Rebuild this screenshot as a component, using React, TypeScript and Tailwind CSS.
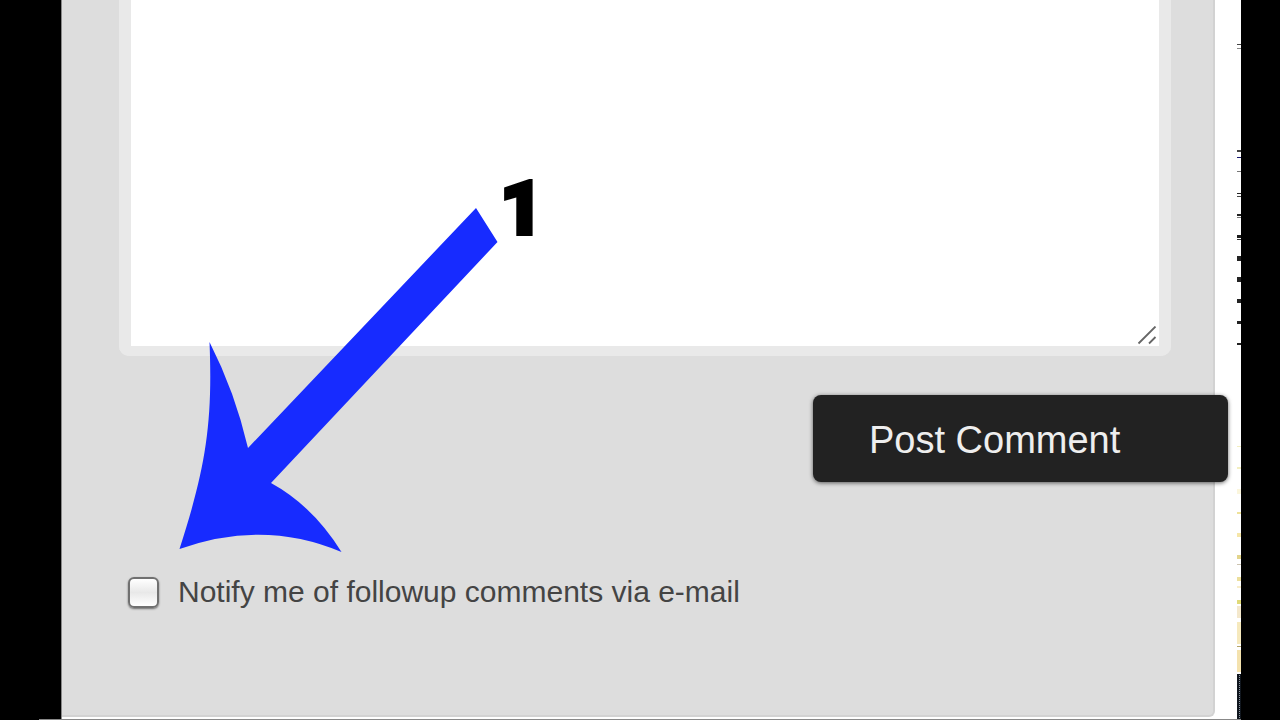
import React, { useState } from 'react';

interface Mark {
  y: number;
  h: number;
  color: string;
}

// Cropped edge of the neighbouring column
const marks: Mark[] = [
  { y: 44, h: 1, color: '#444444' },
  { y: 48, h: 1, color: '#888888' },
  { y: 150, h: 2, color: '#444444' },
  { y: 157, h: 1, color: '#16166e' },
  { y: 171, h: 1, color: '#777777' },
  { y: 193, h: 1, color: '#222222' },
  { y: 196, h: 1, color: '#444444' },
  { y: 214, h: 2, color: '#222222' },
  { y: 217, h: 1, color: '#777777' },
  { y: 235, h: 3, color: '#1c1c1c' },
  { y: 239, h: 1, color: '#333333' },
  { y: 256, h: 5, color: '#222222' },
  { y: 277, h: 5, color: '#222222' },
  { y: 299, h: 4, color: '#222222' },
  { y: 321, h: 3, color: '#222222' },
  { y: 343, h: 2, color: '#222222' },
  { y: 446, h: 1, color: '#f3efc0' },
  { y: 467, h: 2, color: '#f3efc0' },
  { y: 489, h: 5, color: '#fbf6dd' },
  { y: 512, h: 2, color: '#efe29a' },
  { y: 533, h: 4, color: '#f6e6a8' },
  { y: 555, h: 4, color: '#e3d58c' },
  { y: 564, h: 1, color: '#ccc3b0' },
  { y: 577, h: 4, color: '#ecdf9c' },
  { y: 586, h: 2, color: '#f8edc8' },
  { y: 600, h: 4, color: '#e0da78' },
  { y: 606, h: 12, color: '#f4e8cc' },
  { y: 622, h: 22, color: '#f6e9bd' },
  { y: 646, h: 1, color: '#b5a468' },
  { y: 650, h: 22, color: '#f4e2ae' },
  { y: 674, h: 45, color: '#10161e' },
];

const EdgeStrip: React.FC = () => (
  <svg width="4" height="719" viewBox="0 0 4 719" className="block" aria-hidden="true">
    {marks.map((m) => (
      <rect key={m.y} x="0" y={m.y} width="4" height={m.h} fill={m.color} />
    ))}
    <path d="M2.5 675V719" stroke="#8a95a0" strokeWidth="1" strokeDasharray="1 1" />
  </svg>
);

const Arrow: React.FC = () => (
  <svg width="320" height="346" viewBox="179 207 320 346" className="block" aria-hidden="true">
    <path
      d="M476 208L497.500 242L271 483Q313 506 341.500 552Q264 519 179.500 549C205 470 213 425 209.500 342Q235 392 248 448Z"
      fill="#172bff"
    />
  </svg>
);

const App: React.FC = () => {
  const [comment, setComment] = useState('');
  const [notify, setNotify] = useState(false);

  return (
    <div className="relative flex min-h-screen flex-col overflow-hidden bg-black font-['Liberation_Sans',Arial,sans-serif]">
      <div className="ml-[61px] mr-[39px] flex flex-1 border-l border-[#888888] bg-white">
        <form
          onSubmit={(e) => e.preventDefault()}
          className="mb-[2px] mr-[22px] min-w-0 flex-1 rounded-br-md border-b-2 border-r-2 border-[#d2d2d2] bg-[#dddddd] pl-[57px] pr-[42px]"
        >
          <div className="relative">
            <textarea
              aria-label="Comment"
              value={comment}
              onChange={(e) => setComment(e.target.value)}
              className="block h-[356px] w-full resize-none rounded-b-[10px] border-x-12 border-b-10 border-[#e9e9e9] bg-white p-4 text-3xl outline-none"
            />
            <svg
              width="20"
              height="20"
              viewBox="0 0 20 20"
              className="absolute bottom-2.5 right-3.5"
              aria-hidden="true"
            >
              <path d="M1.500 17.500L18.500 0.500M12 17.500L18.500 11" fill="none" stroke="#666666" strokeWidth="1.800" />
            </svg>
          </div>

          <div className="-mr-[57px] mt-[39px] flex justify-end">
            <button
              type="submit"
              className="w-[415px] rounded-lg bg-[#222222] px-14 pb-5 pt-6 text-left text-[38px] leading-[43px] text-[#eeeeee] shadow-[0_1px_4px_rgba(0,0,0,0.6)]"
            >
              Post Comment
            </button>
          </div>

          <div className="mt-[92px] flex items-center gap-[19px] pl-[9px]">
            <input
              id="notify"
              type="checkbox"
              checked={notify}
              onChange={(e) => setNotify(e.target.checked)}
              className="size-[31px] appearance-none rounded-md border-2 border-[#707070] bg-linear-to-b from-white via-[#e8e8e8] to-white shadow-[0_1px_2px_rgba(0,0,0,0.5)] checked:bg-[#172bff]"
            />
            <label htmlFor="notify" className="text-[30px] leading-9 text-[#444444]">
              Notify me of followup comments via e-mail
            </label>
          </div>
        </form>
        <EdgeStrip />
      </div>
      <div className="mx-[39px] h-px bg-[#888888]" />

      {/* Annotation over the form */}
      <div className="pointer-events-none absolute left-[179px] top-[207px]">
        <Arrow />
      </div>
      <span className="pointer-events-none absolute left-[500px] top-[168px] font-[Roboto,sans-serif] text-[75px] font-black leading-[80px] text-black [-webkit-text-stroke:4px_black]">
        1
      </span>
    </div>
  );
};

export default App;
